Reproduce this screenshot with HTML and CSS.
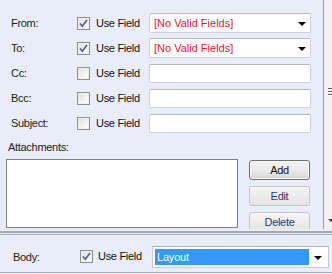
FILE: index.html
```html
<!DOCTYPE html>
<html>
<head>
<meta charset="utf-8">
<link rel="stylesheet" href="styles.css">
</head>
<body>
<div class="top">
  <div class="content">
    <div class="fields">
      <span class="lbl">From:</span>
      <span class="cb checked"><svg width="13" height="13" viewBox="0 0 13 13"><path d="M3 6.5 L5.3 9.3 L10 3" fill="none" stroke="#4b5d96" stroke-width="1.6"/></svg></span>
      <span class="uf">Use Field</span>
      <div class="combo"><span class="red">[No Valid Fields]</span><span class="arr"></span></div>

      <span class="lbl">To:</span>
      <span class="cb checked"><svg width="13" height="13" viewBox="0 0 13 13"><path d="M3 6.5 L5.3 9.3 L10 3" fill="none" stroke="#4b5d96" stroke-width="1.6"/></svg></span>
      <span class="uf">Use Field</span>
      <div class="combo"><span class="red">[No Valid Fields]</span><span class="arr"></span></div>

      <span class="lbl">Cc:</span>
      <span class="cb"></span>
      <span class="uf">Use Field</span>
      <div class="text"></div>

      <span class="lbl">Bcc:</span>
      <span class="cb"></span>
      <span class="uf">Use Field</span>
      <div class="text"></div>

      <span class="lbl">Subject:</span>
      <span class="cb"></span>
      <span class="uf">Use Field</span>
      <div class="text"></div>
    </div>
    <div class="att-label">Attachments:</div>
    <div class="att">
      <div class="listbox"></div>
      <div class="buttons">
        <div class="btn default">Add</div>
        <div class="btn">Edit</div>
        <div class="btn">Delete</div>
      </div>
    </div>
  </div>
  <div class="scrollbar">
    <div class="grip"><i></i><i></i><i></i></div>
    <div class="sarr"></div>
  </div>
</div>
<div class="sep"></div>
<div class="body-row">
  <span class="blbl">Body:</span>
  <span class="cb checked"><svg width="13" height="13" viewBox="0 0 13 13"><path d="M3 6.5 L5.3 9.3 L10 3" fill="none" stroke="#4b5d96" stroke-width="1.6"/></svg></span>
  <span class="buf">Use Field</span>
  <div class="bcombo"><span class="sel">Layout</span><span class="arr"></span></div>
</div>
</body>
</html>
```

FILE: styles.css
```css
* { box-sizing: border-box; }
html, body {
  margin: 0;
  padding: 0;
}
body {
  width: 332px;
  height: 274px;
  overflow: hidden;
  background: #e9edf7;
  font-family: "Liberation Sans", Arial, sans-serif;
  font-size: 11px;
  color: #1c1c24;
}
.top {
  display: flex;
  height: 229px;
}
.content {
  width: 323px;
  height: 229px;
  overflow: hidden;
  padding-top: 13px;
}
.fields {
  display: grid;
  grid-template-columns: 66px 19px 53px 162px;
  grid-auto-rows: 20px;
  row-gap: 5px;
  padding-left: 11px;
  align-items: center;
}
.lbl, .uf, .blbl, .buf {
  letter-spacing: -0.3px;
  line-height: 13px;
}
.uf, .buf { color: #111; }
.cb {
  width: 13px;
  height: 13px;
  border: 1px solid #8f8f8f;
  background: linear-gradient(135deg, #dcdcdc 0%, #f4f4f4 60%, #ffffff 100%);
  box-shadow: inset 0 0 0 1px #f0f0f0;
  position: relative;
  display: block;
}
.cb svg {
  position: absolute;
  left: -1px;
  top: -1px;
}
.combo, .text {
  height: 20px;
  background: #fff;
  border: 1px solid #cfd2d8;
  border-top-color: #b5b8bf;
  border-radius: 2px;
  display: flex;
  align-items: center;
  position: relative;
}
.text { height: 19px; }
.red {
  color: #f0142d;
  padding-left: 4px;
}
.arr {
  position: absolute;
  right: 4px;
  top: 8px;
  width: 0;
  height: 0;
  border-left: 4px solid transparent;
  border-right: 4px solid transparent;
  border-top: 4px solid #000;
}
.att-label {
  margin-top: 8px;
  padding-left: 8px;
  line-height: 13px;
  letter-spacing: -0.3px;
}
.att {
  display: flex;
  margin-top: 5px;
  padding-left: 6px;
}
.listbox {
  width: 232px;
  height: 69px;
  background: #fff;
  border: 1px solid #7e8189;
}
.buttons {
  margin-left: 11px;
  margin-top: 1px;
  display: flex;
  flex-direction: column;
  gap: 6px;
}
.btn {
  width: 61px;
  height: 20px;
  border: 1px solid #c4c6cb;
  border-radius: 3px;
  background: linear-gradient(#f7f7f7, #ececec 50%, #e4e4e4);
  color: #1f3d7a;
  text-align: center;
  line-height: 18px;
  letter-spacing: -0.3px;
}
.btn.default {
  border-color: #707070;
  background: linear-gradient(#f2f2f2, #ebebeb 50%, #d6d6d6);
  color: #111;
  box-shadow: inset 0 0 0 1px #fbfbfb;
}
.scrollbar {
  width: 9px;
  height: 229px;
  border-left: 1px solid #9c9ea4;
  background: #f0f0f0;
  position: relative;
}
.grip {
  position: absolute;
  left: 4px;
  top: 88px;
  width: 4px;
  display: flex;
  flex-direction: column;
  gap: 1px;
}
.grip i {
  display: block;
  height: 1px;
  background: #606060;
  border-bottom: 1px solid #fff;
  box-sizing: content-box;
}
.sarr {
  position: absolute;
  left: 4px;
  top: 219px;
  width: 0;
  height: 0;
  border-left: 3px solid transparent;
  border-right: 3px solid transparent;
  border-top: 3px solid #444;
}
.sep {
  margin-top: 2px;
  height: 4px;
  border-top: 2px solid #a7a9ae;
  border-bottom: 1px solid #a7a9ae;
}
.body-row {
  height: 38px;
  border-bottom: 1px solid #a7a9ae;
  display: flex;
  align-items: flex-start;
  padding-top: 11px;
}
.blbl {
  margin-left: 13px;
  margin-top: 5px;
  width: 67px;
}
.body-row .cb {
  margin-top: 4px;
}
.buf {
  margin-left: 5px;
  margin-top: 4px;
  width: 54px;
}
.bcombo {
  width: 177px;
  height: 22px;
  background: #fff;
  border: 1px solid #c8cbd2;
  border-top-color: #b0b3ba;
  padding: 2px;
  position: relative;
}
.sel {
  display: block;
  width: 154px;
  height: 16px;
  background: #3399ff;
  color: #fff;
  line-height: 16px;
  padding-left: 2px;
  letter-spacing: -0.2px;
}
.bcombo .arr {
  right: 6px;
  top: 9px;
}
```
